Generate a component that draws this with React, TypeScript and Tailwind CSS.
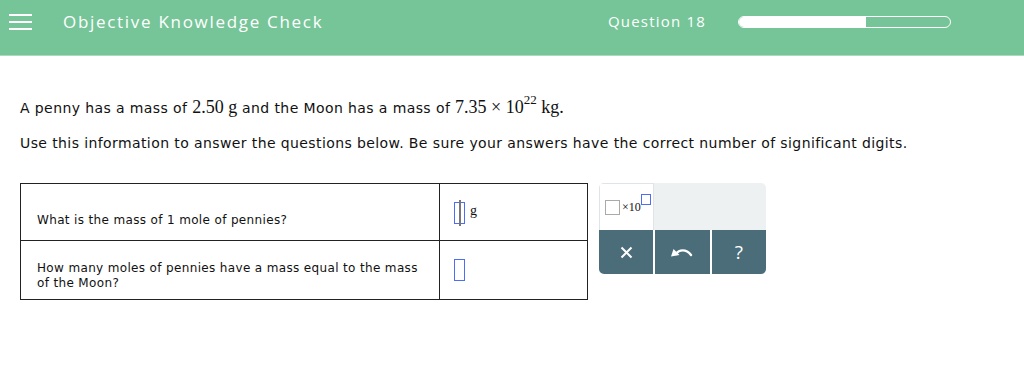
import React from "react";

const sans = "font-['Open_Sans',sans-serif]";
const verdana = "font-['DejaVu_Sans',sans-serif]";
const serif = "font-['Liberation_Serif',serif]";

function AnswerBox({ cursor = false }: { cursor?: boolean }) {
  return (
    <span className="relative inline-block h-[22px] w-[11px] border border-[#4f6cf5]">
      {cursor && (
        <span className="absolute left-1/2 top-[-3px] h-[26px] w-[2px] -translate-x-1/2 bg-[#777]" />
      )}
    </span>
  );
}

export default function App() {
  const progress = 60;

  return (
    <main className="min-h-screen w-[1024px] h-[390px] bg-white overflow-hidden">
      {/* header */}
      <header className="flex h-[56px] items-center border-b border-[#a6dbbb] bg-[#76c598] text-white">
        <div className="ml-[9px] flex w-[23px] flex-col gap-[5px] pb-[11px]">
          <span className="h-[2px] bg-white" />
          <span className="h-[2px] bg-white" />
          <span className="h-[2px] bg-white" />
        </div>
        <h1 className={`${sans} ml-[31px] pb-[12px] text-[17px] tracking-[0.1em]`}>
          Objective Knowledge Check
        </h1>
        <div className="ml-auto mr-[73px] flex items-center pb-[12px]">
          <span className={`${sans} text-[15px] tracking-[0.08em]`}>Question 18</span>
          <div className="ml-[32px] h-[12px] w-[213px] overflow-hidden rounded-full border border-white">
            <div className="h-full bg-white" style={{ width: `${progress}%` }} />
          </div>
        </div>
      </header>

      {/* question */}
      <section className={`${verdana} px-[20px] text-[14px] tracking-[0.4px] text-[#111]`}>
        <p className="mt-[38px] flex items-baseline">
          <span>A penny has a mass of&nbsp;</span>
          <span className={`${serif} text-[18px] tracking-normal`}>2.50 g</span>
          <span>&nbsp;and the Moon has a mass of&nbsp;</span>
          <span className={`${serif} text-[18px] tracking-normal`}>
            7.35 × 10<sup className="relative top-[-9px] align-baseline text-[13px]">22</sup> kg.
          </span>
        </p>
        <p className="mt-[12px]">
          Use this information to answer the questions below. Be sure your answers have the correct number of
          significant digits.
        </p>
      </section>

      <section className="mt-[29px] flex items-start px-[20px]">
        <table className={`${verdana} w-[568px] border-collapse border border-[#222] text-[12px] tracking-[0.35px] text-[#111]`}>
          <tbody>
            <tr className="h-[57px]">
              <td className="w-[419px] border border-[#222] px-[16px] pt-[15px]">What is the mass of 1 mole of pennies?</td>
              <td className="border border-[#222] px-[14px] align-top pt-[18px]">
                <span className="flex items-start gap-[5px]">
                  <AnswerBox cursor />
                  <span className={`${serif} mt-[2px] text-[14px] leading-none`}>g</span>
                </span>
              </td>
            </tr>
            <tr className="h-[59px]">
              <td className="border border-[#222] px-[16px] pt-[12px] leading-[15px]">
                How many moles of pennies have a mass equal to the mass
                <br />
                of the Moon?
              </td>
              <td className="border border-[#222] px-[14px] align-top pt-[18px]">
                <AnswerBox />
              </td>
            </tr>
          </tbody>
        </table>

        {/* keypad */}
        <div className="ml-[11px] w-[167px] overflow-hidden rounded-[5px] bg-[#eef1f2]">
          <div className="flex h-[47px]">
            <div className="flex w-[55px] items-center border-r border-t border-l border-[#e1e4e6] bg-white pl-[5px]">
              <span className="h-[15px] w-[15px] border border-[#aaa]" />
              <span className={`${serif} ml-[2px] text-[12px] text-[#111]`}>×10</span>
              <span className="mb-[16px] h-[11px] w-[10px] border border-[#4f6cf5]" />
            </div>
          </div>
          <div className="grid h-[44px] grid-cols-3 gap-[2px] bg-white">
            <button className="flex items-center justify-center bg-[#4b6d7a] text-white">
              <svg width="13" height="13" viewBox="0 0 13 13">
                <path d="M1.5 1.5 L11.5 11.5 M11.5 1.5 L1.5 11.5" stroke="white" strokeWidth="2" />
              </svg>
            </button>
            <button className="flex items-center justify-center bg-[#4b6d7a] text-white">
              <svg width="24" height="14" viewBox="0 0 24 14">
                <path d="M6 9 C9 4.5, 16 3.5, 21 10" fill="none" stroke="white" strokeWidth="2.4" strokeLinecap="round" />
                <path d="M1 11.5 L3.5 4 L9.5 10 Z" fill="white" />
              </svg>
            </button>
            <button className={`${sans} flex items-center justify-center bg-[#4b6d7a] text-[19px] text-white`}>?</button>
          </div>
        </div>
      </section>
    </main>
  );
}
